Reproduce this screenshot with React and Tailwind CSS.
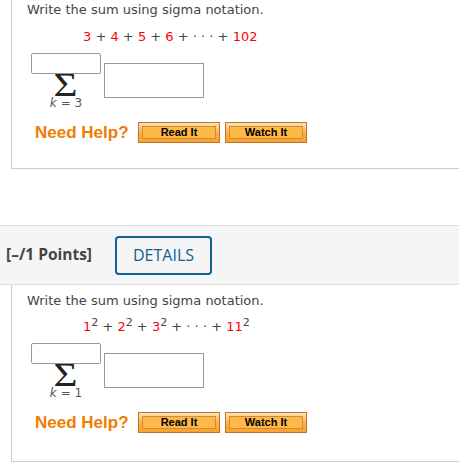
import React from 'react';

const HelpButton = ({ label }) => (
    <div className="w-[82px] h-[21px] border border-[#b8762e] bg-gradient-to-b from-[#fde3b4] via-[#ffb13f] to-[#ff9f2a] px-[3px] pt-[3px] pb-[3px]">
        <div className="h-full border border-[#c98b45] bg-[#ffb946] flex items-center justify-center text-[11px] font-bold text-black leading-none font-['Liberation_Sans',Arial,sans-serif]">
            {label}
        </div>
    </div>
);

const SigmaInput = ({ lower }) => (
    <div className="flex items-start ml-[19px]">
        <div className="flex flex-col items-center w-[70px]">
            <div className="w-[70px] h-[21px] border border-[#999] rounded-[2px] bg-white" />
            <div className="text-[33px] leading-[20px] h-[23px] pt-[1px] text-[#222] font-['Liberation_Serif',serif] scale-x-[1.25]">Σ</div>
            <div className="text-[12px] leading-[12px] text-[#555] font-['DejaVu_Sans',Verdana,sans-serif] whitespace-pre">
                <span className="italic">k</span>{' = '}{lower}
            </div>
        </div>
        <div className="w-[100px] h-[35px] border border-[#999] ml-[3px] mt-[10px] bg-white" />
    </div>
);

const NeedHelp = () => (
    <div className="flex items-center ml-[23px]">
        <span className="text-[17px] font-bold text-[#f07d00] font-['Liberation_Sans',Arial,sans-serif] w-[103px]">Need Help?</span>
        <div className="flex gap-[5px]">
            <HelpButton label="Read It" />
            <HelpButton label="Watch It" />
        </div>
    </div>
);

const Prompt = () => (
    <div className="text-[13px] leading-[16px] text-[#444] font-['DejaVu_Sans',Verdana,sans-serif] ml-[15px]">Write the sum using sigma notation.</div>
);

const Dots = () => <span className="whitespace-pre">{'· · ·'}</span>;

export default function App() {
    return (
        <div className="w-[459px] h-[475px] bg-white overflow-hidden">
            {/* first question */}
            <div className="ml-[11px] h-[169px] border-l border-b border-[#ccc] pt-[2px]">
                <Prompt />
                <div className="mt-[11px] ml-[71px] text-[13px] leading-[16px] text-[#444] font-['DejaVu_Sans',Verdana,sans-serif]">
                    <span className="text-[#f00]">3</span> + <span className="text-[#f00]">4</span> + <span className="text-[#f00]">5</span> + <span className="text-[#f00]">6</span> + <Dots /> + <span className="text-[#f00]">102</span>
                </div>
                <div className="mt-[8px]">
                    <SigmaInput lower="3" />
                </div>
                <div className="mt-[11px]">
                    <NeedHelp />
                </div>
            </div>

            {/* points bar */}
            <div className="mt-[56px] h-[60px] bg-[#f5f5f5] border-t border-b border-[#dedede] flex items-center pl-[6px] font-['Open_Sans',sans-serif]">
                <span className="text-[15.5px] font-bold text-[#444] w-[109px]">[–/1 Points]</span>
                <div className="w-[97px] h-[39px] border-2 border-[#0f6196] rounded-[4px] flex items-center justify-center text-[16px] text-[#0f6196] bg-[#f5f5f5]">
                    DETAILS
                </div>
            </div>

            {/* second question */}
            <div className="ml-[11px] h-[177px] border-l border-b border-[#ccc] pt-[8px]">
                <Prompt />
                <div className="mt-[10px] ml-[71px] text-[13px] leading-[16px] text-[#444] font-['DejaVu_Sans',Verdana,sans-serif]">
                    <span className="text-[#f00]">1</span><sup className="text-[11px]">2</sup> + <span className="text-[#f00]">2</span><sup className="text-[11px]">2</sup> + <span className="text-[#f00]">3</span><sup className="text-[11px]">2</sup> + <Dots /> + <span className="text-[#f00]">11</span><sup className="text-[11px]">2</sup>
                </div>
                <div className="mt-[8px]">
                    <SigmaInput lower="1" />
                </div>
                <div className="mt-[11px]">
                    <NeedHelp />
                </div>
            </div>
        </div>
    );
}
